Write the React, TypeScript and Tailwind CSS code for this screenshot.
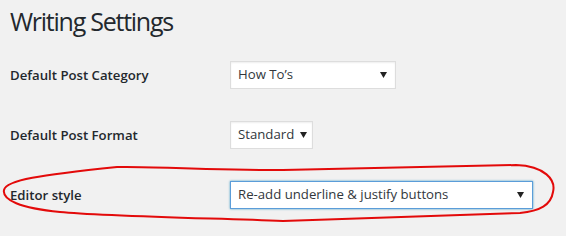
import React from "react";

function Arrow() {
  return (
    <svg width="7" height="6" viewBox="0 0 7 6" className="shrink-0 ml-auto">
      <polygon points="0,0 7,0 3.5,6" fill="#222" />
    </svg>
  );
}

function FakeSelect({
  value,
  width,
  pr,
  focused,
}: {
  value: string;
  width: string;
  pr: string;
  focused?: boolean;
}) {
  return (
    <div
      className={
        "h-[28px] flex items-center pl-[7px] bg-white text-[13.2px] text-[#32373c] " +
        width +
        " " +
        pr +
        (focused
          ? " border border-[#5b9dd9] shadow-[0_0_2px_rgba(30,140,190,0.8)]"
          : " border border-[#dddddd] shadow-[inset_0_1px_2px_rgba(0,0,0,0.07)]")
      }
    >
      <span className="leading-none whitespace-nowrap">{value}</span>
      <Arrow />
    </div>
  );
}

function Row({ label, children }: { label: string; children: React.ReactNode }) {
  return (
    <div className="h-[60px] flex items-center">
      <div className="w-[220px] shrink-0 font-semibold text-[13.2px] text-[#23282d] pt-[1px]">{label}</div>
      {children}
    </div>
  );
}

export default function App() {
  return (
    <div
      className="relative w-[566px] h-[236px] overflow-hidden bg-[#f1f1f1] px-[10px]"
      style={{ fontFamily: '"Open Sans", "Noto Sans", sans-serif' }}
    >
      <h1 className="text-[25px] leading-[30px] pt-[6px] h-[45px] text-[#23282d] font-normal tracking-[-0.05em]">
        Writing Settings
      </h1>
      <Row label="Default Post Category">
        <FakeSelect value="How To’s" width="w-[166px]" pr="pr-[8px]" />
      </Row>
      <Row label="Default Post Format">
        <FakeSelect value="Standard" width="w-[83px]" pr="pr-[5px]" />
      </Row>
      <Row label="Editor style">
        <FakeSelect value="Re-add underline & justify buttons" width="w-[303px]" pr="pr-[8px]" focused />
      </Row>
      <svg className="absolute left-0 top-0 pointer-events-none" width="566" height="236" viewBox="0 0 566 236">
        <path
          d="M 117 167 C 150 166, 200 170, 283 170 L 516 165 C 545 166, 556 180, 553 192 C 551 205, 540 211, 520 213 L 283 221 C 200 218, 100 216, 60 212 C 20 208, 2 200, 4 190 C 6 180, 40 175, 117 167 Z"
          fill="none"
          stroke="#e30a0a"
          strokeWidth="2"
        />
      </svg>
    </div>
  );
}
